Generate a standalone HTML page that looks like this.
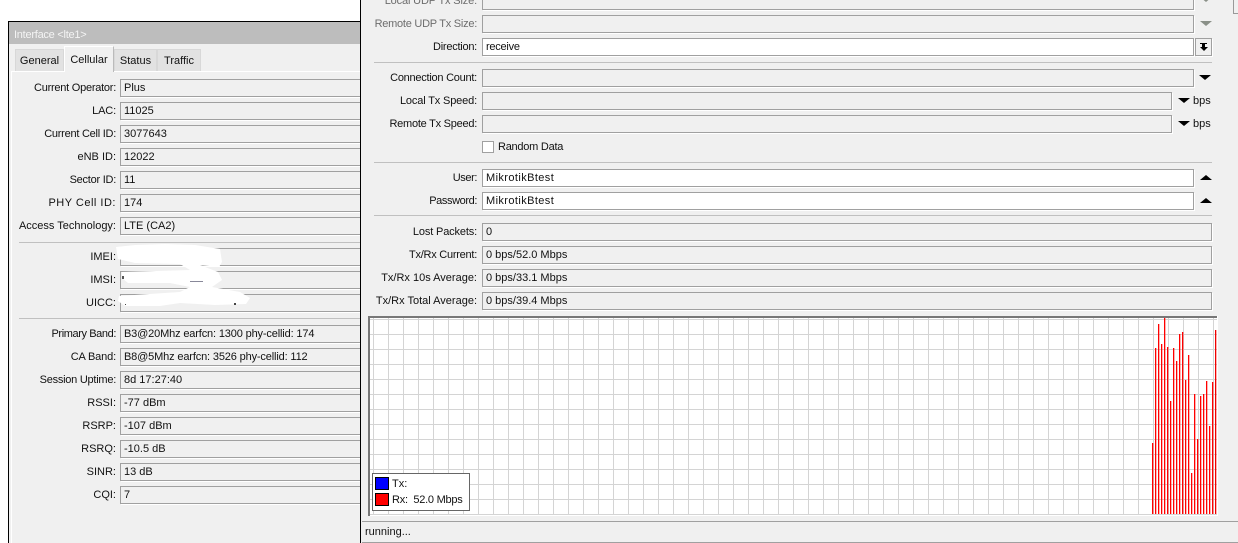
<!DOCTYPE html>
<html><head><meta charset="utf-8">
<style>
html,body{margin:0;padding:0;background:#fff}
#p{position:relative;width:1238px;height:543px;overflow:hidden;background:#fff;font:11px/19px "Liberation Sans",sans-serif;color:#111}
#p div{position:absolute;box-sizing:border-box;white-space:nowrap}
.f{height:18px;border:1px solid #a0a0a0;box-shadow:1px 1px 0 #fff;padding-left:3px;line-height:17px;background:#f0f0f0}
.w{background:#fff}
.l{text-align:right;height:18px;line-height:19px}
.a{left:0;width:116px}
.b{left:361px;width:116px}
.s{height:1px;background:#c0c0c0}
.L .f{left:120px;width:250px}
.R .f{left:482px;width:712px}
.g{color:#6d6d6d}
.d{width:0;height:0;border-left:6px solid transparent;border-right:6px solid transparent;border-top:5px solid #000}
.u{width:0;height:0;border-left:6px solid transparent;border-right:6px solid transparent;border-bottom:5px solid #000}
.t{background:#e2e2e2;border:1px solid #d8d8d8;border-bottom:0;text-align:center;top:49px;height:22px;line-height:23px}
.r{width:1px;background:#f00;bottom:29px;box-shadow:1px 0 0 rgba(255,0,0,.3)}
.n1{letter-spacing:-.15px}
.n2{letter-spacing:-.25px}
.n3{letter-spacing:-.4px}
</style></head><body><div id="p">

<!-- left window -->
<div class="L" style="left:0;top:0;width:361px;height:543px">
<div style="left:8px;top:21px;width:353px;height:522px;background:#f0f0f0;border-left:1px solid #000;border-top:1px solid #000"></div>
<div class="n2" style="left:9px;top:22px;width:352px;height:22px;background:#bdbdbd;color:#f4f4f4;padding-left:5px;line-height:26px">Interface &lt;lte1&gt;</div>
<div style="left:11px;top:71px;width:350px;height:1px;background:#fff"></div>
<div style="left:11px;top:71px;width:1px;height:472px;background:#fff"></div>
<div class="t" style="left:15px;width:49px">General</div>
<div class="t" style="left:114px;width:43px">Status</div>
<div class="t" style="left:157px;width:44px">Traffic</div>
<div class="t" style="left:64px;width:50px;top:46px;height:26px;background:#f0f0f0;border-color:#fff;border-right:1px solid #bbb;line-height:26px">Cellular</div>

<div class="l a n2" style="top:79px">Current Operator:</div><div class="f" style="top:79px">Plus</div>
<div class="l a n1" style="top:102px">LAC:</div><div class="f" style="top:102px">11025</div>
<div class="l a n2" style="top:125px">Current Cell ID:</div><div class="f" style="top:125px">3077643</div>
<div class="l a" style="top:148px">eNB ID:</div><div class="f" style="top:148px">12022</div>
<div class="l a n2" style="top:171px">Sector ID:</div><div class="f" style="top:171px">11</div>
<div class="l a" style="top:194px;letter-spacing:.5px">PHY Cell ID:</div><div class="f" style="top:194px">174</div>
<div class="l a" style="top:217px">Access Technology:</div><div class="f" style="top:217px">LTE (CA2)</div>
<div class="s" style="left:19px;top:242px;width:342px"></div>
<div class="l a" style="top:248px">IMEI:</div><div class="f" style="top:248px"></div>
<div class="l a" style="top:271px">IMSI:</div><div class="f" style="top:271px"></div>
<div class="l a" style="top:294px">UICC:</div><div class="f" style="top:294px"></div>
<div class="s" style="left:19px;top:318px;width:342px"></div>
<div class="l a n3" style="top:325px">Primary Band:</div><div class="f n1" style="top:325px">B3@20Mhz earfcn: 1300 phy-cellid: 174</div>
<div class="l a n1" style="top:348px">CA Band:</div><div class="f n1" style="top:348px">B8@5Mhz earfcn: 3526 phy-cellid: 112</div>
<div class="l a n2" style="top:371px">Session Uptime:</div><div class="f" style="top:371px">8d 17:27:40</div>
<div class="l a" style="top:394px">RSSI:</div><div class="f" style="top:394px">-77 dBm</div>
<div class="l a" style="top:417px">RSRP:</div><div class="f" style="top:417px">-107 dBm</div>
<div class="l a" style="top:440px">RSRQ:</div><div class="f" style="top:440px">-10.5 dB</div>
<div class="l a" style="top:463px">SINR:</div><div class="f" style="top:463px">13 dB</div>
<div class="l a" style="top:486px">CQI:</div><div class="f" style="top:486px">7</div>
</div>

<svg style="position:absolute;left:0;top:0" width="361" height="543"><path fill="#fff" d="M116 247L135 245L165 244L195 245L220 249L222 262L219 267L200 265L218 272L222 280L212 287L240 292L250 298L246 304L215 305L180 303L160 306L125 306L118 301L119 296L180 292L190 287L170 283L128 283L122 278L122 272L190 270L180 264L135 263L118 259Z"/></svg>
<svg style="position:absolute;left:0;top:0" width="361" height="543"><rect x="122" y="276" width="2" height="3" fill="#555"/><rect x="190" y="281" width="13" height="1" fill="#889"/><rect x="125" y="304" width="1" height="1" fill="#444"/><rect x="234" y="303" width="2" height="2" fill="#444"/></svg>

<!-- right window -->
<div class="R" style="left:360px;top:0;width:878px;height:543px;background:#f0f0f0;border-left:1px solid #000"></div>
<div class="R" style="left:0;top:0;width:1238px;height:543px">
<div class="l b g n1" style="top:-8px">Local UDP Tx Size:</div><div class="f" style="top:-8px"></div>
<div class="d" style="left:1200px;top:-3px;border-top-color:#8a9088"></div>
<div class="l b g n2" style="top:15px">Remote UDP Tx Size:</div><div class="f" style="top:15px"></div>
<div class="d" style="left:1200px;top:21px;border-top-color:#8a9088"></div>
<div class="l b n2" style="top:38px">Direction:</div><div class="f w n2" style="top:38px">receive</div>
<div style="left:1195px;top:38px;width:17px;height:18px;border:1px solid #a0a0a0;box-shadow:1px 1px 0 #fff"></div>
<div style="left:1200px;top:43px;width:7px;height:1px;background:#000"></div>
<div class="d" style="left:1200px;top:47px;border-left-width:4px;border-right-width:4px;border-top-width:4px"></div>
<div style="left:1202px;top:44px;width:3px;height:3px;background:#000"></div>
<div class="s" style="left:374px;top:62px;width:838px"></div>
<div class="l b n2" style="top:69px">Connection Count:</div><div class="f" style="top:69px"></div>
<div class="d" style="left:1199px;top:75px"></div>
<div class="l b n1" style="top:92px">Local Tx Speed:</div><div class="f" style="top:92px;width:690px"></div>
<div class="d" style="left:1178px;top:98px"></div><div style="left:1193px;top:92px">bps</div>
<div class="l b n2" style="top:115px">Remote Tx Speed:</div><div class="f" style="top:115px;width:690px"></div>
<div class="d" style="left:1178px;top:121px"></div><div style="left:1193px;top:115px">bps</div>
<div style="left:482px;top:141px;width:12px;height:12px;border:1px solid #a0a0a0;background:#fff"></div>
<div class="n2" style="left:498px;top:138px">Random Data</div>
<div class="s" style="left:374px;top:162px;width:838px"></div>
<div class="l b n3" style="top:169px">User:</div><div class="f w" style="top:169px;letter-spacing:.4px">MikrotikBtest</div>
<div class="u" style="left:1200px;top:175px"></div>
<div class="l b n3" style="top:192px">Password:</div><div class="f w" style="top:192px;letter-spacing:.4px">MikrotikBtest</div>
<div class="u" style="left:1200px;top:198px"></div>
<div class="s" style="left:374px;top:215px;width:838px"></div>
<div class="l b n1" style="top:223px">Lost Packets:</div><div class="f" style="top:223px;width:730px">0</div>
<div class="l b n2" style="top:246px">Tx/Rx Current:</div><div class="f" style="top:246px;width:730px">0 bps/52.0 Mbps</div>
<div class="l b" style="top:269px">Tx/Rx 10s Average:</div><div class="f" style="top:269px;width:730px">0 bps/33.1 Mbps</div>
<div class="l b" style="top:292px">Tx/Rx Total Average:</div><div class="f" style="top:292px;width:730px">0 bps/39.4 Mbps</div>

<!-- graph -->
<div style="left:368px;top:316px;width:850px;height:200px;background-color:#fff;border-top:2px solid #777;border-left:2px solid #777;background-image:linear-gradient(to right,#d4d4d4 1px,transparent 1px),linear-gradient(to bottom,#d4d4d4 1px,transparent 1px);background-size:15px 15px;background-position:3px 1px;background-origin:padding-box"></div>
<div style="left:1217px;top:316px;width:1px;height:200px;background:#fff"></div>
<div style="left:370px;top:515px;width:848px;height:1px;background:#fff"></div>
<div class="r" style="left:1152px;top:443px"></div>
<div class="r" style="left:1155px;top:348px"></div>
<div class="r" style="left:1158px;top:324px"></div>
<div class="r" style="left:1161px;top:344px"></div>
<div class="r" style="left:1164px;top:318px"></div>
<div class="r" style="left:1167px;top:347px"></div>
<div class="r" style="left:1170px;top:401px"></div>
<div class="r" style="left:1173px;top:348px"></div>
<div class="r" style="left:1176px;top:361px"></div>
<div class="r" style="left:1179px;top:334px"></div>
<div class="r" style="left:1182px;top:332px"></div>
<div class="r" style="left:1185px;top:380px"></div>
<div class="r" style="left:1188px;top:355px"></div>
<div class="r" style="left:1191px;top:473px"></div>
<div class="r" style="left:1194px;top:394px"></div>
<div class="r" style="left:1197px;top:439px"></div>
<div class="r" style="left:1200px;top:396px"></div>
<div class="r" style="left:1203px;top:394px"></div>
<div class="r" style="left:1206px;top:381px"></div>
<div class="r" style="left:1209px;top:426px"></div>
<div class="r" style="left:1212px;top:382px"></div>
<div class="r" style="left:1215px;top:330px;background:#e00"></div>

<!-- legend -->
<div style="left:372px;top:473px;width:98px;height:38px;background:#fff;border:1px solid #666"></div>
<div style="left:375px;top:477px;width:14px;height:13px;background:#00f;border:1px solid #000"></div>
<div style="left:375px;top:493px;width:14px;height:13px;background:#f00;border:1px solid #000"></div>
<div style="left:392px;top:475px">Tx:</div>
<div class="n2" style="left:392px;top:491px">Rx:&nbsp; 52.0 Mbps</div>

<!-- status bar -->
<div style="left:362px;top:521px;width:876px;height:1px;background:#a0a0a0"></div>
<div style="left:362px;top:542px;width:876px;height:1px;background:#a0a0a0"></div>
<div style="left:365px;top:523px">running...</div>
<div style="left:1233px;top:-2px;width:8px;height:16px;border:1px solid #999;background:#f0f0f0"></div>
</div>
</div></body></html>
